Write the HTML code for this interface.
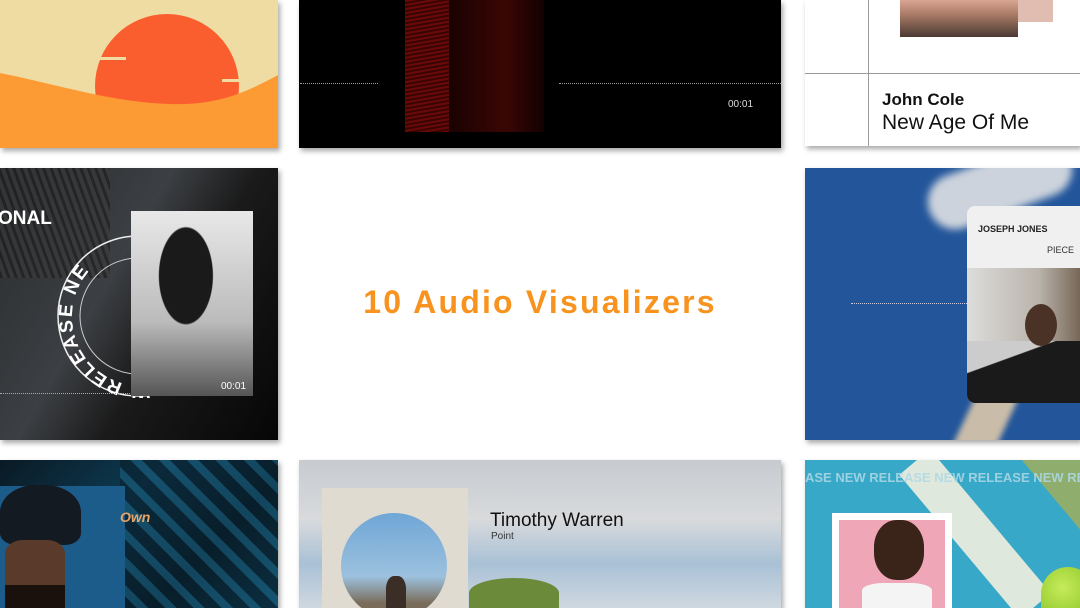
<!DOCTYPE html>
<html><head><meta charset="utf-8"><style>
*{margin:0;padding:0;box-sizing:border-box}
html{width:1080px;height:608px;overflow:hidden}
body{width:1080px;height:608px;background:#fff;position:relative;overflow:hidden;font-family:"Liberation Sans",sans-serif}
.t{position:absolute;overflow:hidden;box-shadow:2px 3px 5px rgba(0,0,0,.35)}
.a{position:absolute}
</style></head><body>

<div class="t" style="left:0;top:0;width:278px;height:148px;background:#efdca3">
<svg class="a" style="left:0;top:0" width="278" height="148">
<circle cx="167" cy="86" r="72" fill="#fb5e2e"/>
<rect x="98" y="57" width="28" height="3" fill="#efdca3"/>
<rect x="222" y="79" width="20" height="3" fill="#efdca3"/>
<path d="M0 73 C60 85 110 102 170 104 C220 106 250 90 278 75 L278 148 L0 148Z" fill="#fc9a34"/>
</svg>
</div>

<div class="t" style="left:299px;top:0;width:482px;height:148px;background:#000">
<div class="a" style="left:106px;top:0;width:45px;height:132px;background:repeating-linear-gradient(170deg,#6a0a08 0 2px,#3a0403 2px 4px)"></div>
<div class="a" style="left:150px;top:0;width:95px;height:132px;background:linear-gradient(90deg,#1a0202,#3a0604 60%,#120101)"></div>
<div class="a" style="left:1px;top:83px;width:78px;border-top:1px dotted #999"></div>
<div class="a" style="left:260px;top:83px;width:222px;border-top:1px dotted #999"></div>
<div class="a" style="left:429px;top:99px;color:#ddd;font-size:10px">00:01</div>
</div>

<div class="t" style="left:805px;top:0;width:275px;height:146px;background:#fff">
<div class="a" style="left:63px;top:0;width:1px;height:146px;background:#999"></div>
<div class="a" style="left:0;top:73px;width:275px;height:1px;background:#999"></div>
<div class="a" style="left:95px;top:0;width:118px;height:37px;background:linear-gradient(180deg,#d9a592,#a87a66 40%,#4a3a33)"></div>
<div class="a" style="left:213px;top:0;width:35px;height:22px;background:#d4a090;opacity:.7"></div>
<div class="a" style="left:77px;top:90px;font-weight:bold;font-size:17px;color:#111">John Cole</div>
<div class="a" style="left:77px;top:111px;font-size:21px;color:#111">New Age Of Me</div>
</div>

<div class="t" style="left:0;top:168px;width:278px;height:272px;background:linear-gradient(120deg,#2a2c2e,#3c3f43 40%,#1a1a1a 60%,#060606)">
<div class="a" style="left:0;top:0;width:110px;height:110px;background:repeating-linear-gradient(70deg,#1a1a1a 0 3px,#3a3a3a 3px 7px);opacity:.6"></div>
<div class="a" style="left:-2px;top:40px;color:#fff;font-weight:bold;font-size:19px">ONAL</div>
<svg class="a" style="left:50px;top:60px" width="170" height="170"><circle cx="88" cy="88" r="80" fill="none" stroke="#eee" stroke-width="1.5"/><circle cx="88" cy="88" r="58" fill="none" stroke="#ccc" stroke-width="1"/>
<defs><path id="c" d="M100 157 A69 69 0 1 1 140 40"/></defs>
<text font-family="Liberation Sans" font-weight="bold" font-size="19" fill="#fff" letter-spacing="2"><textPath href="#c" startOffset="0">W RELEASE NE</textPath></text></svg>
<div class="a" style="left:131px;top:43px;width:122px;height:185px;background:radial-gradient(ellipse at 45% 35%,#1a1a1a 0 28%,transparent 29%),linear-gradient(180deg,#e8e8e8,#bbb 60%,#555)"></div>
<div class="a" style="left:0;top:225px;width:130px;border-top:1px dotted #aaa"></div>
<div class="a" style="left:221px;top:213px;color:#fff;font-size:10px">00:01</div>
</div>

<div class="a" style="left:0;top:284px;width:1080px;text-align:center;color:#f7931e;font-weight:bold;font-size:32px;letter-spacing:2.2px">10 Audio Visualizers</div>

<div class="t" style="left:805px;top:168px;width:275px;height:272px;background:#22559a">
<div class="a" style="left:120px;top:-10px;width:150px;height:55px;border-radius:30px;background:#ccd3dc;transform:rotate(-20deg);filter:blur(4px)"></div>
<div class="a" style="left:160px;top:220px;width:40px;height:70px;background:#c9bca8;transform:rotate(25deg);filter:blur(3px)"></div>
<div class="a" style="left:46px;top:135px;width:116px;border-top:1px dotted #ccd"></div>
<div class="a" style="left:162px;top:38px;width:120px;height:197px;border-radius:8px;background:#f0f0f0;overflow:hidden">
<div class="a" style="left:11px;top:18px;font-size:9px;font-weight:bold;color:#222">JOSEPH JONES</div>
<div class="a" style="left:80px;top:39px;font-size:9px;color:#333">PIECE</div>
<div class="a" style="left:0;top:62px;width:120px;height:80px;background:linear-gradient(90deg,#ddd,#b9b3aa 60%,#6b5a4a)"></div>
<div class="a" style="left:0;top:135px;width:120px;height:62px;background:linear-gradient(160deg,#ccc 0 30%,#1a1a1a 31%)"></div>
<div class="a" style="left:58px;top:98px;width:32px;height:42px;border-radius:50%;background:#4a3326"></div>
</div>
</div>

<div class="t" style="left:0;top:460px;width:278px;height:148px;background:linear-gradient(135deg,#0a1a24,#0d3a52 40%,#05141d 70%,#0f4a66)">
<div class="a" style="left:120px;top:0;width:158px;height:148px;background:repeating-linear-gradient(45deg,#0a2230 0 12px,#185a78 12px 20px);opacity:.7"></div>
<div class="a" style="left:0;top:26px;width:125px;height:122px;background:#1c5c8a"></div>
<div class="a" style="left:0;top:25px;width:81px;height:60px;border-radius:45% 45% 20% 20%;background:#141a22"></div>
<div class="a" style="left:5px;top:80px;width:60px;height:45px;border-radius:30% 30% 0 0;background:#5a3a2a"></div>
<div class="a" style="left:5px;top:125px;width:60px;height:23px;background:#1a110c"></div>
<div class="a" style="left:120px;top:49px;color:#e8a56a;font-weight:bold;font-style:italic;font-size:14px">Own</div>
</div>

<div class="t" style="left:299px;top:460px;width:482px;height:148px;background:linear-gradient(180deg,#c7cbd0,#d8dadc 40%,#a9c1d6 70%,#cfd8e0)">
<div class="a" style="left:170px;top:118px;width:90px;height:30px;border-radius:50% 50% 0 0;background:#6b8a3a"></div>
<div class="a" style="left:23px;top:28px;width:146px;height:120px;background:#e0dbd0;overflow:hidden">
<div class="a" style="left:19px;top:25px;width:106px;height:106px;border-radius:50%;background:linear-gradient(180deg,#6fa6d6,#9cc1de 60%,#7a6c5a 85%)"></div>
<div class="a" style="left:64px;top:88px;width:20px;height:32px;background:#3a2e26;border-radius:40% 40% 0 0"></div>
</div>
<div class="a" style="left:191px;top:50px;font-size:19px;color:#111">Timothy Warren</div>
<div class="a" style="left:192px;top:71px;font-size:10px;color:#333">Point</div>
</div>

<div class="t" style="left:805px;top:460px;width:275px;height:148px;background:#38a8c8">
<div class="a" style="left:150px;top:-20px;width:40px;height:188px;background:#dfe8dc;transform:rotate(-40deg)"></div>
<div class="a" style="left:200px;top:-20px;width:120px;height:188px;background:#8fae6e;transform:rotate(-40deg);transform-origin:0 0"></div>
<div class="a" style="left:0;top:10px;width:275px;overflow:hidden;white-space:nowrap;color:#aed9e6;font-weight:bold;font-size:13px;opacity:.85">ASE NEW RELEASE NEW RELEASE NEW RELEASE</div>
<div class="a" style="left:27px;top:53px;width:120px;height:95px;background:#fff;overflow:hidden">
<div class="a" style="left:7px;top:7px;width:106px;height:88px;background:#efa7b8"></div>
<div class="a" style="left:42px;top:7px;width:50px;height:60px;border-radius:45%;background:#3a2318"></div>
<div class="a" style="left:30px;top:70px;width:70px;height:25px;background:#f4f4f4;border-radius:30% 30% 0 0"></div>
</div>
<div class="a" style="left:236px;top:107px;width:54px;height:41px;border-radius:27px 27px 0 0;background:radial-gradient(circle at 40% 50%,#c6ec5a,#8cc528)"></div>
</div>

</body></html>
